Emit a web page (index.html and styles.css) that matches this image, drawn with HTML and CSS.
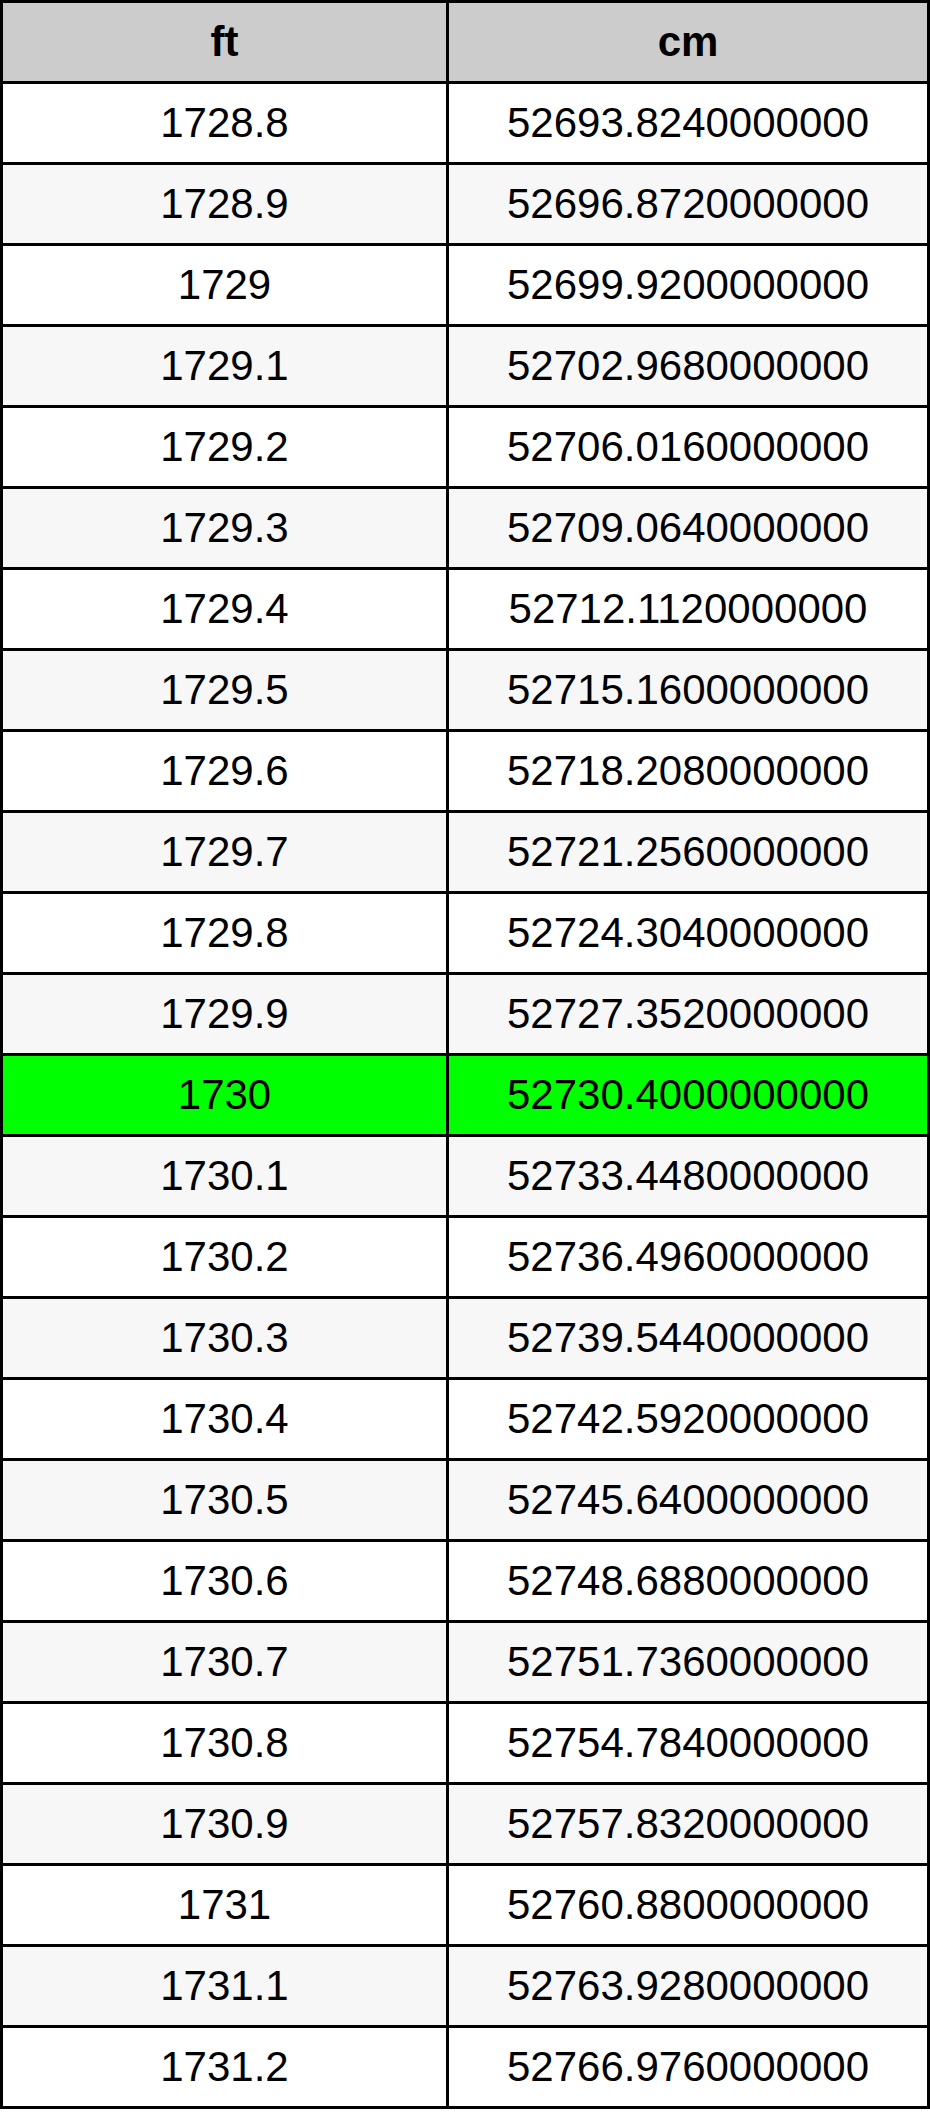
FILE: index.html
```html
<!DOCTYPE html>
<html>
<head>
<meta charset="utf-8">
<link rel="stylesheet" href="styles.css">
</head>
<body>
<table class="conv">
<colgroup><col class="c1"><col class="c2"></colgroup>
<thead>
<tr><th>ft</th><th>cm</th></tr>
</thead>
<tbody>
<tr><td>1728.8</td><td>52693.8240000000</td></tr>
<tr><td>1728.9</td><td>52696.8720000000</td></tr>
<tr><td>1729</td><td>52699.9200000000</td></tr>
<tr><td>1729.1</td><td>52702.9680000000</td></tr>
<tr><td>1729.2</td><td>52706.0160000000</td></tr>
<tr><td>1729.3</td><td>52709.0640000000</td></tr>
<tr><td>1729.4</td><td>52712.1120000000</td></tr>
<tr><td>1729.5</td><td>52715.1600000000</td></tr>
<tr><td>1729.6</td><td>52718.2080000000</td></tr>
<tr><td>1729.7</td><td>52721.2560000000</td></tr>
<tr><td>1729.8</td><td>52724.3040000000</td></tr>
<tr><td>1729.9</td><td>52727.3520000000</td></tr>
<tr class="hl"><td>1730</td><td>52730.4000000000</td></tr>
<tr><td>1730.1</td><td>52733.4480000000</td></tr>
<tr><td>1730.2</td><td>52736.4960000000</td></tr>
<tr><td>1730.3</td><td>52739.5440000000</td></tr>
<tr><td>1730.4</td><td>52742.5920000000</td></tr>
<tr><td>1730.5</td><td>52745.6400000000</td></tr>
<tr><td>1730.6</td><td>52748.6880000000</td></tr>
<tr><td>1730.7</td><td>52751.7360000000</td></tr>
<tr><td>1730.8</td><td>52754.7840000000</td></tr>
<tr><td>1730.9</td><td>52757.8320000000</td></tr>
<tr><td>1731</td><td>52760.8800000000</td></tr>
<tr><td>1731.1</td><td>52763.9280000000</td></tr>
<tr><td>1731.2</td><td>52766.9760000000</td></tr>
</tbody>
</table>
</body>
</html>
```
FILE: styles.css
```css
html, body {
  margin: 0;
  padding: 0;
  background: #ffffff;
}

.conv {
  width: 930px;
  border-collapse: collapse;
  table-layout: fixed;
  font-family: "Liberation Sans", Arial, sans-serif;
  font-size: 42px;
  color: #000000;
}

.conv .c1 {
  width: 446px;
}

.conv th,
.conv td {
  border: 3px solid #000000;
  height: 78px;
  padding: 0;
  text-align: center;
  vertical-align: middle;
  line-height: 1;
}

.conv th {
  background: #cccccc;
  font-weight: bold;
}

.conv tbody tr:nth-child(even) td {
  background: #f7f7f7;
}

.conv tbody tr.hl td {
  background: #00ff00;
}
```
